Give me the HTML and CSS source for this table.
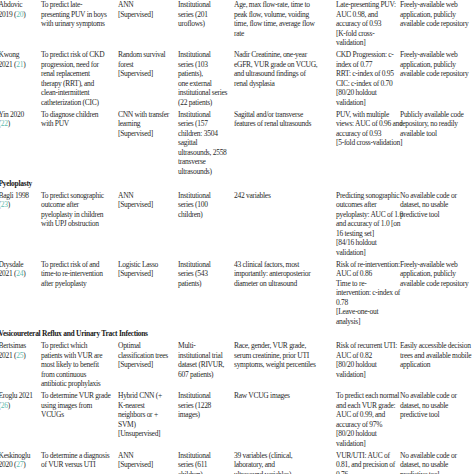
FILE: index.html
```html
<!DOCTYPE html>
<html>
<head>
<meta charset="utf-8">
<link rel="stylesheet" href="styles.css">
</head>
<body>
<div class="table">
  <div class="row">
    <div class="c">Abdovic<br>2019 (<span class="ref">20</span>)</div>
    <div class="c">To predict late-<br>presenting PUV in boys<br>with urinary symptoms</div>
    <div class="c">ANN<br>[Supervised]</div>
    <div class="c">Institutional<br>series (201<br>uroflows)</div>
    <div class="c">Age, max flow-rate, time to<br>peak flow, volume, voiding<br>time, flow time, average flow<br>rate</div>
    <div class="c">Late-presenting PUV:<br>AUC 0.98, and<br>accuracy of 0.93<br>[K-fold cross-<br>validation]</div>
    <div class="c">Freely-available web<br>application, publicly<br>available code repository</div>
  </div>
  <div class="row">
    <div class="c">Kwong<br>2021 (<span class="ref">21</span>)</div>
    <div class="c">To predict risk of CKD<br>progression, need for<br>renal replacement<br>therapy (RRT), and<br>clean-intermittent<br>catheterization (CIC)</div>
    <div class="c">Random survival<br>forest<br>[Supervised]</div>
    <div class="c">Institutional<br>series (103<br>patients),<br>one external<br>institutional series<br>(22 patients)</div>
    <div class="c">Nadir Creatinine, one-year<br>eGFR, VUR grade on VCUG,<br>and ultrasound findings of<br>renal dysplasia</div>
    <div class="c">CKD Progression: c-<br>index of 0.77<br>RRT: c-index of 0.95<br>CIC: c-index of 0.70<br>[80/20 holdout<br>validation]</div>
    <div class="c">Freely-available web<br>application, publicly<br>available code repository</div>
  </div>
  <div class="row">
    <div class="c">Yin 2020<br>(<span class="ref">22</span>)</div>
    <div class="c">To diagnose children<br>with PUV</div>
    <div class="c">CNN with transfer<br>learning<br>[Supervised]</div>
    <div class="c">Institutional<br>series (157<br>children: 3504<br>sagittal<br>ultrasounds, 2558<br>transverse<br>ultrasounds)</div>
    <div class="c">Sagittal and/or transverse<br>features of renal ultrasounds</div>
    <div class="c">PUV, with multiple<br>views: AUC of 0.96 and<br>accuracy of 0.93<br>[5-fold cross-validation]</div>
    <div class="c">Publicly available code<br>repository, no readily<br>available tool</div>
  </div>
  <div class="section">Pyeloplasty</div>
  <div class="row">
    <div class="c">Bagli 1998<br>(<span class="ref">23</span>)</div>
    <div class="c">To predict sonographic<br>outcome after<br>pyeloplasty in children<br>with UPJ obstruction</div>
    <div class="c">ANN<br>[Supervised]</div>
    <div class="c">Institutional<br>series (100<br>children)</div>
    <div class="c">242 variables</div>
    <div class="c">Predicting sonographic<br>outcomes after<br>pyeloplasty: AUC of 1.0<br>and accuracy of 1.0 [on<br>16 testing set]<br>[84/16 holdout<br>validation]</div>
    <div class="c">No available code or<br>dataset, no usable<br>predictive tool</div>
  </div>
  <div class="row">
    <div class="c">Drysdale<br>2021 (<span class="ref">24</span>)</div>
    <div class="c">To predict risk of and<br>time-to re-intervention<br>after pyeloplasty</div>
    <div class="c">Logistic Lasso<br>[Supervised]</div>
    <div class="c">Institutional<br>series (543<br>patients)</div>
    <div class="c">43 clinical factors, most<br>importantly: anteroposterior<br>diameter on ultrasound</div>
    <div class="c">Risk of re-intervention:<br>AUC of 0.86<br>Time to re-<br>intervention: c-index of<br>0.78<br>[Leave-one-out<br>analysis]</div>
    <div class="c">Freely-available web<br>application, publicly<br>available code repository</div>
  </div>
  <div class="section">Vesicoureteral Reflux and Urinary Tract Infections</div>
  <div class="row">
    <div class="c">Bertsimas<br>2021 (<span class="ref">25</span>)</div>
    <div class="c">To predict which<br>patients with VUR are<br>most likely to benefit<br>from continuous<br>antibiotic prophylaxis</div>
    <div class="c">Optimal<br>classification trees<br>[Supervised]</div>
    <div class="c">Multi-<br>institutional trial<br>dataset (RIVUR,<br>607 patients)</div>
    <div class="c">Race, gender, VUR grade,<br>serum creatinine, prior UTI<br>symptoms, weight percentiles</div>
    <div class="c">Risk of recurrent UTI:<br>AUC of 0.82<br>[80/20 holdout<br>validation]</div>
    <div class="c">Easily accessible decision<br>trees and available mobile<br>application</div>
  </div>
  <div class="row">
    <div class="c">Eroglu 2021<br>(<span class="ref">26</span>)</div>
    <div class="c">To determine VUR grade<br>using images from<br>VCUGs</div>
    <div class="c">Hybrid CNN (+<br>K-nearest<br>neighbors or +<br>SVM)<br>[Unsupervised]</div>
    <div class="c">Institutional<br>series (1228<br>images)</div>
    <div class="c">Raw VCUG images</div>
    <div class="c">To predict each normal<br>and each VUR grade:<br>AUC of 0.99, and<br>accuracy of 97%<br>[80/20 holdout<br>validation]</div>
    <div class="c">No available code or<br>dataset, no usable<br>predictive tool</div>
  </div>
  <div class="row">
    <div class="c">Keskinoglu<br>2020 (<span class="ref">27</span>)</div>
    <div class="c">To determine a diagnosis<br>of VUR versus UTI</div>
    <div class="c">ANN<br>[Supervised]</div>
    <div class="c">Institutional<br>series (611<br>children)</div>
    <div class="c">39 variables (clinical,<br>laboratory, and<br>ultrasound variables)</div>
    <div class="c">VUR/UTI: AUC of<br>0.81, and precision of<br>0.76</div>
    <div class="c">No available code or<br>dataset, no usable<br>predictive tool</div>
  </div>
</div>
</body>
</html>
```

FILE: styles.css
```css
html, body {
  margin: 0;
  padding: 0;
  background: #ffffff;
  overflow: hidden;
  width: 474px;
  height: 474px;
}

.table {
  display: flex;
  flex-direction: column;
  gap: 2.6px;
  margin-left: -1.5px;
  font-family: "Liberation Serif", "Times New Roman", serif;
  font-size: 7.5px;
  letter-spacing: -0.28px;
  line-height: 9.5px;
  color: #2a2a2a;
}

.row {
  display: grid;
  grid-template-columns: 42.5px 77px 60px 56px 102px 64px 1fr;
}

.c {
  white-space: nowrap;
}

.ref {
  color: #5fbcb0;
}

.section {
  font-weight: bold;
  color: #1a1a1a;
  white-space: nowrap;
}
```
